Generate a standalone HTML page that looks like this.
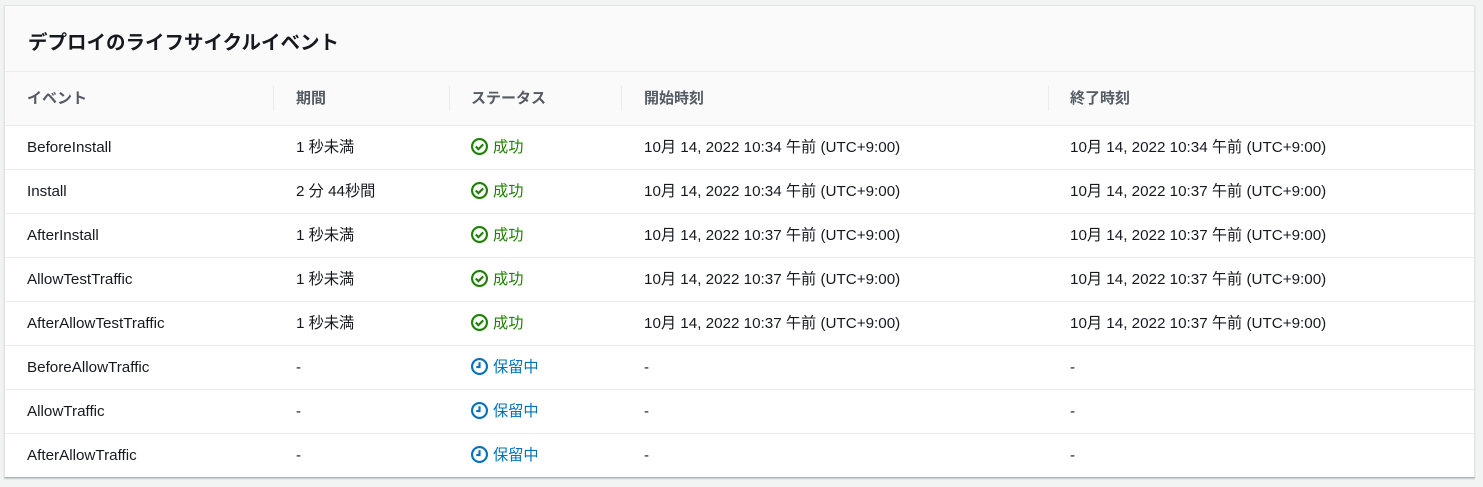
<!DOCTYPE html><html><head><meta charset="utf-8"><style>
body{margin:0;background:#f2f3f3;font-family:"Liberation Sans","Noto Sans CJK JP",sans-serif;width:1483px;height:487px;overflow:hidden}
.card{position:absolute;left:4px;top:5px;width:1469px;height:471px;background:#fff;border:1px solid #e3e5e5;border-bottom:1px solid #aab7b8;box-shadow:0 1px 1px rgba(0,28,36,.2)}
.hd{height:65px;background:#fafafa;border-bottom:1px solid #eaeded;position:relative}
.hd span{position:absolute;left:23px;top:20px;font-size:19.5px;font-weight:bold;color:#16191f}
.row{position:relative;height:43px;border-bottom:1px solid #eaeded;font-size:15.2px;color:#16191f}
.th{height:53px;background:#fafafa;font-weight:bold;color:#545b64;font-size:15px}
.row div{position:absolute;top:0;line-height:43px;white-space:nowrap}
.th div{line-height:53px}
.c1{left:22px}.c2{left:291px}.c3{left:466px}.c4{left:639px}.c5{left:1065px}
.sep{position:absolute;top:14px;width:1px;height:25px;background:#eaeded}
.ok{color:#1d8102}.pend{color:#0073bb}
svg{vertical-align:-3px;margin-right:5px}
.row:last-child{border-bottom:none}
</style></head><body><div class="card">
<div class="hd"><span>デプロイのライフサイクルイベント</span></div>
<div class="row th"><div class="c1">イベント</div><span class="sep" style="left:268px"></span><div class="c2">期間</div><span class="sep" style="left:444px"></span><div class="c3">ステータス</div><span class="sep" style="left:616px"></span><div class="c4">開始時刻</div><span class="sep" style="left:1043px"></span><div class="c5">終了時刻</div></div>
<div class="row"><div class="c1">BeforeInstall</div><div class="c2">1 秒未満</div><div class="c3 ok"><svg width="17" height="17" viewBox="0 0 16 16"><circle cx="8" cy="8" r="7" fill="none" stroke="#1d8102" stroke-width="2"/><path d="M4.5 8l2.5 2.5 4.5-4.5" fill="none" stroke="#1d8102" stroke-width="2"/></svg>成功</div><div class="c4">10月 14, 2022 10:34 午前 (UTC+9:00)</div><div class="c5">10月 14, 2022 10:34 午前 (UTC+9:00)</div></div>
<div class="row"><div class="c1">Install</div><div class="c2">2 分 44秒間</div><div class="c3 ok"><svg width="17" height="17" viewBox="0 0 16 16"><circle cx="8" cy="8" r="7" fill="none" stroke="#1d8102" stroke-width="2"/><path d="M4.5 8l2.5 2.5 4.5-4.5" fill="none" stroke="#1d8102" stroke-width="2"/></svg>成功</div><div class="c4">10月 14, 2022 10:34 午前 (UTC+9:00)</div><div class="c5">10月 14, 2022 10:37 午前 (UTC+9:00)</div></div>
<div class="row"><div class="c1">AfterInstall</div><div class="c2">1 秒未満</div><div class="c3 ok"><svg width="17" height="17" viewBox="0 0 16 16"><circle cx="8" cy="8" r="7" fill="none" stroke="#1d8102" stroke-width="2"/><path d="M4.5 8l2.5 2.5 4.5-4.5" fill="none" stroke="#1d8102" stroke-width="2"/></svg>成功</div><div class="c4">10月 14, 2022 10:37 午前 (UTC+9:00)</div><div class="c5">10月 14, 2022 10:37 午前 (UTC+9:00)</div></div>
<div class="row"><div class="c1">AllowTestTraffic</div><div class="c2">1 秒未満</div><div class="c3 ok"><svg width="17" height="17" viewBox="0 0 16 16"><circle cx="8" cy="8" r="7" fill="none" stroke="#1d8102" stroke-width="2"/><path d="M4.5 8l2.5 2.5 4.5-4.5" fill="none" stroke="#1d8102" stroke-width="2"/></svg>成功</div><div class="c4">10月 14, 2022 10:37 午前 (UTC+9:00)</div><div class="c5">10月 14, 2022 10:37 午前 (UTC+9:00)</div></div>
<div class="row"><div class="c1">AfterAllowTestTraffic</div><div class="c2">1 秒未満</div><div class="c3 ok"><svg width="17" height="17" viewBox="0 0 16 16"><circle cx="8" cy="8" r="7" fill="none" stroke="#1d8102" stroke-width="2"/><path d="M4.5 8l2.5 2.5 4.5-4.5" fill="none" stroke="#1d8102" stroke-width="2"/></svg>成功</div><div class="c4">10月 14, 2022 10:37 午前 (UTC+9:00)</div><div class="c5">10月 14, 2022 10:37 午前 (UTC+9:00)</div></div>
<div class="row"><div class="c1">BeforeAllowTraffic</div><div class="c2">-</div><div class="c3 pend"><svg width="17" height="17" viewBox="0 0 16 16"><circle cx="8" cy="8" r="7" fill="none" stroke="#0073bb" stroke-width="2"/><path d="M8 4v4.5H5" fill="none" stroke="#0073bb" stroke-width="2"/></svg>保留中</div><div class="c4">-</div><div class="c5">-</div></div>
<div class="row"><div class="c1">AllowTraffic</div><div class="c2">-</div><div class="c3 pend"><svg width="17" height="17" viewBox="0 0 16 16"><circle cx="8" cy="8" r="7" fill="none" stroke="#0073bb" stroke-width="2"/><path d="M8 4v4.5H5" fill="none" stroke="#0073bb" stroke-width="2"/></svg>保留中</div><div class="c4">-</div><div class="c5">-</div></div>
<div class="row"><div class="c1">AfterAllowTraffic</div><div class="c2">-</div><div class="c3 pend"><svg width="17" height="17" viewBox="0 0 16 16"><circle cx="8" cy="8" r="7" fill="none" stroke="#0073bb" stroke-width="2"/><path d="M8 4v4.5H5" fill="none" stroke="#0073bb" stroke-width="2"/></svg>保留中</div><div class="c4">-</div><div class="c5">-</div></div>
</div></body></html>
